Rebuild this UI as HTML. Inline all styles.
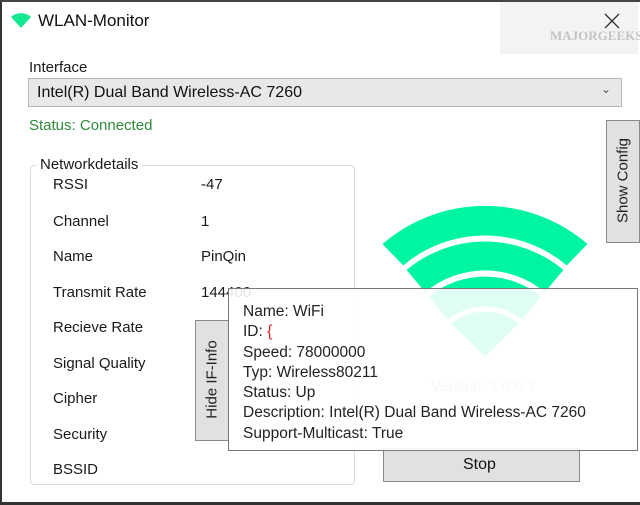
<!DOCTYPE html>
<html><head><meta charset="utf-8"><style>
body{margin:0;width:640px;height:505px;overflow:hidden;background:#fff;font-family:"Liberation Sans",sans-serif;position:relative}
.a{position:absolute;white-space:nowrap}
.t{font-size:15px;color:#1a1a1a}
.btn{position:absolute;background:#e1e1e1;border:1px solid #8a8a8a;box-sizing:border-box}
.v{position:absolute;transform:rotate(-90deg);transform-origin:center;white-space:nowrap;font-size:15px;color:#222}
</style></head><body>
<div style="position:absolute;left:0;top:0;width:2px;height:505px;background:#333"></div>
<div style="position:absolute;left:0;top:502px;width:640px;height:3px;background:#333"></div>
<div style="position:absolute;left:0;top:0;width:640px;height:2px;background:#444"></div>
<svg class="a" style="left:10px;top:11px" width="22" height="18" viewBox="0 0 22 18"><path d="M11 17 L1 6 A15 15 0 0 1 21 6 Z" fill="#14e890"/></svg>
<div class="a" style="left:38px;top:11px;font-size:17px;color:#111">WLAN-Monitor</div>
<div style="position:absolute;left:500px;top:2px;width:138px;height:52px;background:#f3f3f3"></div>
<div class="a" style="left:550px;top:28px;font-size:13px;color:#c4c4c4;font-weight:bold;font-family:'Liberation Serif',serif">MAJORGEEKS</div>
<svg class="a" style="left:603px;top:12px" width="18" height="18" viewBox="0 0 18 18"><path d="M2 2 L16 16 M16 2 L2 16" stroke="#333" stroke-width="1.3"/></svg>
<div class="a t" style="left:29px;top:59px">Interface</div>
<div style="position:absolute;left:28px;top:78px;width:594px;height:29px;background:#e8e8e8;border:1px solid #b8b8b8;box-sizing:border-box"></div>
<div class="a" style="left:37px;top:84px;font-size:16px;color:#111">Intel(R) Dual Band Wireless-AC 7260</div>
<div class="a" style="left:601px;top:82px;font-size:12px;color:#555">⌄</div>
<div class="a" style="left:29px;top:117px;font-size:15px;color:#2e8b3a">Status: Connected</div>
<div style="position:absolute;left:30px;top:165px;width:325px;height:320px;border:1px solid #d8dbe0;border-radius:4px;box-sizing:border-box"></div>
<div class="a t" style="left:36px;top:156px;background:#fff;padding:0 4px">Networkdetails</div>
<div class="a t" style="left:53px;top:176px">RSSI</div><div class="a t" style="left:201px;top:176px">-47</div>
<div class="a t" style="left:53px;top:213px">Channel</div><div class="a t" style="left:201px;top:213px">1</div>
<div class="a t" style="left:53px;top:248px">Name</div><div class="a t" style="left:201px;top:248px">PinQin</div>
<div class="a t" style="left:53px;top:284px">Transmit Rate</div><div class="a t" style="left:201px;top:284px">144400</div>
<div class="a t" style="left:53px;top:319px">Recieve Rate</div>
<div class="a t" style="left:53px;top:355px">Signal Quality</div>
<div class="a t" style="left:53px;top:390px">Cipher</div>
<div class="a t" style="left:53px;top:426px">Security</div>
<div class="a t" style="left:53px;top:461px">BSSID</div>
<svg class="a" style="left:370px;top:190px" width="230" height="180" viewBox="370 190 230 180">
<g fill="#00f5a0">
<path d="M382.5 244 A157 157 0 0 1 587.5 244 L566.8 265.4 A127 127 0 0 0 403.2 265.4 Z"/>
<path d="M406.6 270 A122 122 0 0 1 563.4 270 L544.8 292.2 A93 93 0 0 0 425.2 292.2 Z"/>
<path d="M428.8 296.6 A89 89 0 0 1 541.2 296.6 L522 319.6 A59 59 0 0 0 448 319.6 Z"/>
<path d="M451.2 323.5 A54 54 0 0 1 518.8 323.5 L485 357 Z"/>
</g></svg>
<div class="a" style="left:431px;top:378px;font-size:15px;color:#bbb">Version: 1.0.0.1</div>
<div class="btn" style="left:383px;top:448px;width:197px;height:34px"></div>
<div class="a" style="left:463px;top:456px;font-size:16px;color:#111">Stop</div>
<div class="btn" style="left:606px;top:120px;width:34px;height:123px"></div>
<div class="v" style="left:573px;top:172px;width:100px;text-align:center">Show Config</div>
<div class="btn" style="left:195px;top:320px;width:34px;height:121px"></div>
<div class="v" style="left:162px;top:371px;width:100px;text-align:center">Hide IF-Info</div>
<div style="position:absolute;left:228px;top:288px;width:410px;height:163px;background:rgba(255,255,255,0.88);border:1px solid #777;box-sizing:border-box"></div>
<div class="a" style="left:243px;top:302px;font-size:15.5px;line-height:20.3px;color:#222">Name: WiFi<br>ID: <span style="color:#d22">{</span><br>Speed: 78000000<br>Typ: Wireless80211<br>Status: Up<br>Description: Intel(R) Dual Band Wireless-AC 7260<br>Support-Multicast: True</div>
</body></html>
